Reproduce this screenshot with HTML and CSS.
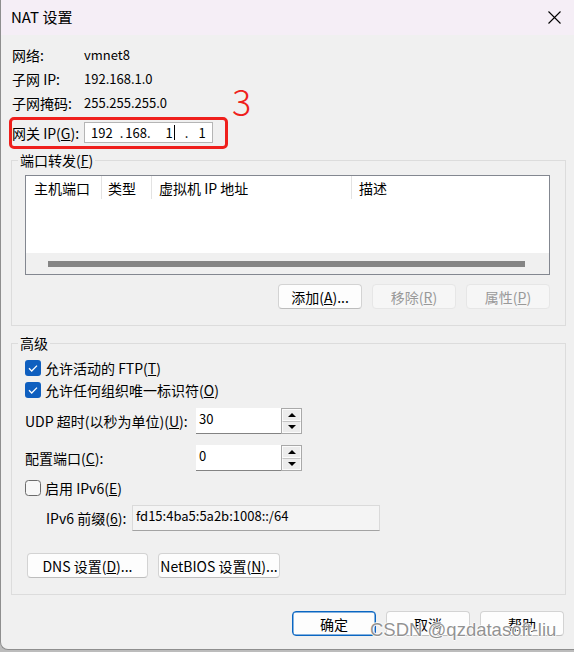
FILE: index.html
```html
<!DOCTYPE html>
<html lang="zh-CN">
<head>
<meta charset="utf-8">
<title>NAT 设置</title>
<link rel="stylesheet" href="styles.css">
</head>
<body>
<div class="window">
  <div class="titlebar">
    <span class="title">NAT 设置</span>
    <svg class="close" width="13" height="13" viewBox="0 0 13 13"><path d="M0.5 0.5 L12.5 12.5 M12.5 0.5 L0.5 12.5" stroke="#000" stroke-width="1.1" fill="none"/></svg>
  </div>
  <div class="content">
    <div class="info">
      <div class="row"><span class="lbl">网络:</span><span class="val">vmnet8</span></div>
      <div class="row"><span class="lbl">子网 IP:</span><span class="val">192.168.1.0</span></div>
      <div class="row"><span class="lbl">子网掩码:</span><span class="val">255.255.255.0</span></div>
    </div>
    <div class="row gw">
      <span class="lbl">网关 IP(<u>G</u>):</span>
      <div class="ipbox">
        <span class="o1">192</span><span class="d1">.</span><span class="o2">168</span><span class="d2">.</span><span class="o3">1</span><span class="caret"></span><span class="d3">.</span><span class="o4">1</span>
      </div>
    </div>

    <fieldset class="group g1">
      <legend>端口转发(<u>F</u>)</legend>
      <div class="g1-body">
        <div class="listbox">
          <div class="lhead">
            <div class="col c1">主机端口</div>
            <div class="col c2">类型</div>
            <div class="col c3">虚拟机 IP 地址</div>
            <div class="col c4">描述</div>
          </div>
          <div class="hscroll"><div class="thumb"></div></div>
        </div>
        <div class="btnrow">
          <button class="btn">添加(<u>A</u>)...</button>
          <button class="btn dis">移除(<u>R</u>)</button>
          <button class="btn dis">属性(<u>P</u>)</button>
        </div>
      </div>
    </fieldset>

    <fieldset class="group g2">
      <legend>高级</legend>
      <div class="g2-body">
        <div class="cbrow">
          <svg class="cb" width="16" height="16" viewBox="0 0 16 16"><rect x="0" y="0" width="16" height="16" rx="3" fill="#0f5fbf"/><path d="M4 8.3 L6.7 11 L12 5.6" stroke="#fff" stroke-width="1.3" fill="none"/></svg>
          <span>允许活动的 FTP(<u>T</u>)</span>
        </div>
        <div class="cbrow">
          <svg class="cb" width="16" height="16" viewBox="0 0 16 16"><rect x="0" y="0" width="16" height="16" rx="3" fill="#0f5fbf"/><path d="M4 8.3 L6.7 11 L12 5.6" stroke="#fff" stroke-width="1.3" fill="none"/></svg>
          <span>允许任何组织唯一标识符(<u>O</u>)</span>
        </div>
        <div class="numrow udp">
          <span class="nlbl">UDP 超时(以秒为单位)(<u>U</u>):</span>
          <div class="numinput">30</div>
          <div class="spin">
            <span><svg width="8" height="4" viewBox="0 0 8 4"><path d="M0 4 L4 0 L8 4 Z" fill="#000"/></svg></span>
            <span><svg width="8" height="4" viewBox="0 0 8 4"><path d="M0 0 L8 0 L4 4 Z" fill="#000"/></svg></span>
          </div>
        </div>
        <div class="numrow port">
          <span class="nlbl">配置端口(<u>C</u>):</span>
          <div class="numinput">0</div>
          <div class="spin">
            <span><svg width="8" height="4" viewBox="0 0 8 4"><path d="M0 4 L4 0 L8 4 Z" fill="#000"/></svg></span>
            <span><svg width="8" height="4" viewBox="0 0 8 4"><path d="M0 0 L8 0 L4 4 Z" fill="#000"/></svg></span>
          </div>
        </div>
        <div class="cbrow ipv6">
          <svg class="cb" width="16" height="16" viewBox="0 0 16 16"><rect x="0.5" y="0.5" width="15" height="15" rx="3" fill="#f7f7f7" stroke="#6b6b6b"/></svg>
          <span>启用 IPv6(<u>E</u>)</span>
        </div>
        <div class="prefixrow">
          <span class="plbl">IPv6 前缀(<u>6</u>):</span>
          <div class="pinput">fd15:4ba5:5a2b:1008::/64</div>
        </div>
        <div class="dnsrow">
          <button class="btn dns">DNS 设置(<u>D</u>)...</button>
          <button class="btn nb">NetBIOS 设置(<u>N</u>)...</button>
        </div>
      </div>
    </fieldset>

    <div class="footer">
      <button class="btn def">确定</button>
      <button class="btn">取消</button>
      <button class="btn">帮助</button>
    </div>
  </div>

  <div class="mark-box"></div>
  <div class="mark-num">3</div>
  <div class="watermark">CSDN @qzdatasoft-liu</div>
</div>
</body>
</html>
```

FILE: styles.css
```css
html, body {
  margin: 0;
  padding: 0;
}
body {
  background: #bcbcbc;
  font-family: "Noto Sans CJK SC", "Noto Sans", sans-serif;
  font-size: 14px;
  color: #000;
}
.window {
  position: relative;
  width: 573px;
  height: 649px;
  background: #f0f0f0;
  border-left: 1px solid #8e8e8e;
  border-bottom: 1px solid #8e8e8e;
  border-bottom-left-radius: 8px;
  overflow: hidden;
}
.titlebar {
  height: 35px;
  box-sizing: border-box;
  padding: 0 13px 2px 10px;
  display: flex;
  align-items: center;
  justify-content: space-between;
  background: #f5eef6;
}
.title {
  font-size: 15px;
  line-height: 18px;
}
.close {
  display: block;
  margin-top: 2px;
}
.content {
  padding: 0 8px 0 10px;
}
.info {
  margin-top: 8px;
  margin-left: 1px;
}
.row {
  display: flex;
  align-items: center;
  height: 24px;
  line-height: 18px;
}
.lbl {
  width: 72px;
  flex: none;
}
.val {
  font-size: 13px;
}
.gw {
  margin-top: 7px;
  margin-left: 1px;
  height: 21px;
}
.ipbox {
  width: 129px;
  height: 21px;
  box-sizing: border-box;
  background: #fff;
  border: 1px solid #b5b5b5;
  display: flex;
  align-items: center;
  font-size: 13px;
  line-height: 16px;
}
.o1 { margin-left: 6px; }
.d1 { margin-left: 7px; }
.o2 { margin-left: 2px; }
.d2 { margin-left: 0; }
.o3 { margin-left: 15px; }
.caret {
  width: 1px;
  height: 15px;
  background: #000;
  margin-left: 1px;
}
.d3 { margin-left: 10px; }
.o4 { margin-left: 10px; }

fieldset.group {
  margin: 8px 0 0 0;
  padding: 0;
  border: 1px solid #dcdcdc;
  min-width: 0;
}
fieldset.group legend {
  margin-left: 6px;
  padding: 0 2px;
  line-height: 18px;
  font-size: 14px;
}
.g1-body {
  padding: 6px 15px 16px 13px;
}
.listbox {
  height: 100px;
  box-sizing: border-box;
  border: 1px solid #838790;
  background: #fff;
  display: flex;
  flex-direction: column;
  justify-content: space-between;
}
.lhead {
  display: flex;
  height: 24px;
}
.col {
  height: 23px;
  line-height: 24px;
  box-sizing: border-box;
  white-space: nowrap;
}
.c1 { width: 76px; padding-left: 8px; border-right: 1px solid #e3e3e3; }
.c2 { width: 50px; padding-left: 6px; border-right: 1px solid #e3e3e3; }
.c3 { width: 200px; padding-left: 7px; border-right: 1px solid #e3e3e3; }
.c4 { padding-left: 7px; }
.hscroll {
  height: 21px;
  background: #f0f0f0;
  display: flex;
  align-items: center;
}
.thumb {
  margin-left: 22px;
  width: 477px;
  height: 6px;
  background: #858585;
}
.btnrow {
  margin-top: 9px;
  display: flex;
  justify-content: flex-end;
  gap: 10px;
}
.btn {
  width: 84px;
  height: 25px;
  box-sizing: border-box;
  padding: 0;
  border: 1px solid #d3d3d3;
  border-bottom-color: #bdbdbd;
  border-radius: 4px;
  background: #fdfdfd;
  font-family: inherit;
  font-size: 14px;
  line-height: 18px;
  color: #000;
}
.btn.dis {
  background: #f6f6f6;
  border-color: #e6e6e6;
  color: #999;
}
.btn.def {
  border: 1px solid #0a66c2;
  box-shadow: inset 0 0 0 0.5px #0a66c2;
}

.g2 {
  margin-top: 8px;
}
.g2-body {
  padding: 5px 0 16px 13px;
}
.cbrow {
  display: flex;
  align-items: center;
  height: 22px;
  line-height: 18px;
}
.cb {
  display: block;
  flex: none;
  margin-right: 4px;
}
.numrow {
  display: flex;
  align-items: center;
  height: 26px;
  line-height: 18px;
}
.udp { margin-top: 7px; }
.port { margin-top: 11px; }
.nlbl {
  width: 171px;
  flex: none;
}
.numinput {
  width: 85px;
  height: 26px;
  box-sizing: border-box;
  background: #fff;
  border-bottom: 1px solid #838383;
  padding: 2px 0 0 3px;
  font-size: 13px;
  line-height: 18px;
}
.spin {
  width: 21px;
  height: 26px;
  box-sizing: border-box;
  border: 1px solid #a9a9a9;
  background: #fff;
  display: flex;
  flex-direction: column;
}
.spin span {
  flex: 1;
  display: flex;
  align-items: center;
  justify-content: center;
  background: #ececec;
  border: 1px solid #fbfbfb;
}
.spin span + span {
  border-top-color: #c4c4c4;
}
.spin svg { display: block; }
.ipv6 { margin-top: 6px; }
.prefixrow {
  margin-top: 6px;
  display: flex;
  align-items: center;
  height: 26px;
  line-height: 18px;
}
.plbl {
  width: 86px;
  padding-left: 21px;
  flex: none;
}
.pinput {
  width: 248px;
  height: 26px;
  box-sizing: border-box;
  background: #f4f4f4;
  border: 1px solid #dadada;
  border-bottom-color: #a3a3a3;
  padding: 1px 0 0 3px;
  font-size: 13px;
  line-height: 18px;
}
.dnsrow {
  margin-top: 22px;
  margin-left: 2px;
  display: flex;
  gap: 10px;
}
.btn.dns { width: 121px; }
.btn.nb { width: 122px; }
.footer {
  margin-top: 16px;
  padding-right: 2px;
  display: flex;
  justify-content: flex-end;
  gap: 10px;
}

/* annotation overlays */
.mark-box {
  position: absolute;
  left: 8px;
  top: 117px;
  width: 219px;
  height: 32px;
  box-sizing: border-box;
  border: 3px solid #ef1f1c;
  border-radius: 5px;
}
.mark-num {
  position: absolute;
  left: 231px;
  top: 82px;
  font-size: 36px;
  line-height: 36px;
  font-weight: 300;
  color: #ef1f1c;
}
.watermark {
  position: absolute;
  left: 369px;
  top: 619px;
  font-family: "Liberation Sans", Arial, sans-serif;
  font-size: 18.5px;
  line-height: 22px;
  color: rgba(110, 110, 110, 0.75);
  text-shadow: 1px 0 0 rgba(255,255,255,0.8), -1px 0 0 rgba(255,255,255,0.8), 0 1px 0 rgba(255,255,255,0.8), 0 -1px 0 rgba(255,255,255,0.8);
  white-space: nowrap;
}
```
